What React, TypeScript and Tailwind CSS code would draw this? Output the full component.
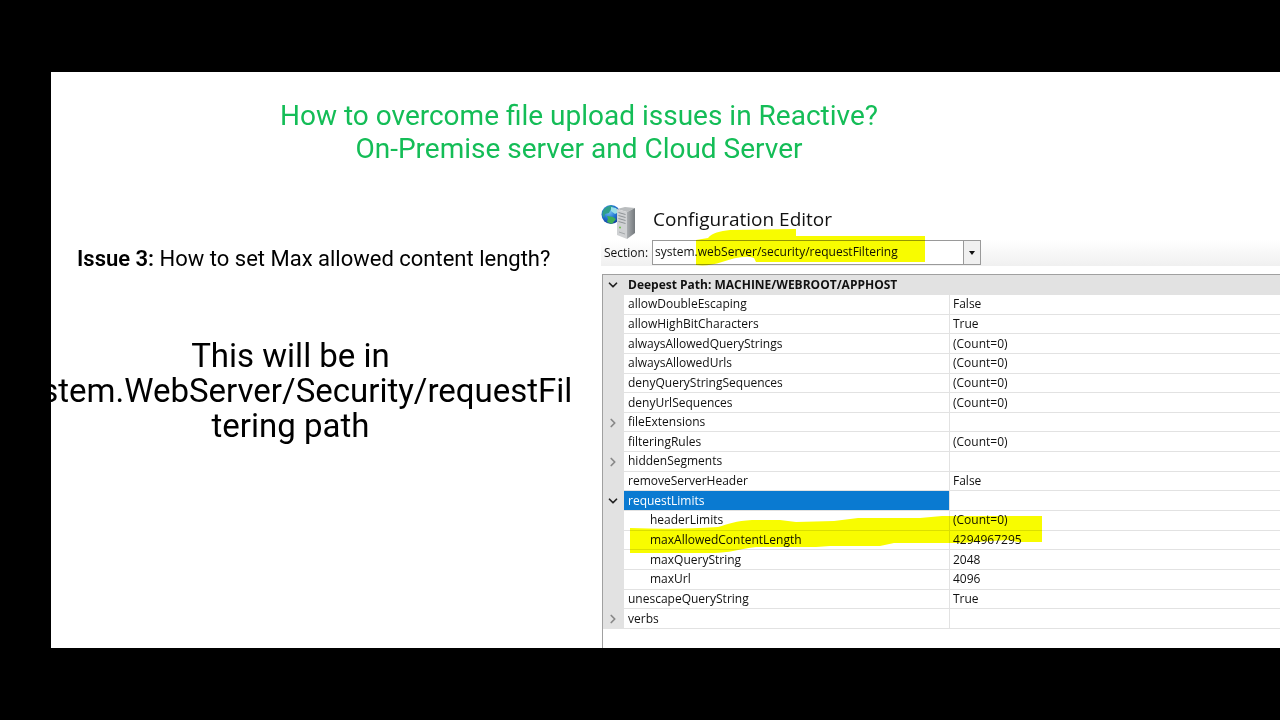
import { clsx } from "clsx";
import { ChevronDown, ChevronRight } from "lucide-react";

type Setting = {
  name: string;
  value?: string;
  nested?: boolean;
  selected?: boolean;
  state?: "open" | "closed";
};

const settings: Setting[] = [
  { name: "allowDoubleEscaping", value: "False" },
  { name: "allowHighBitCharacters", value: "True" },
  { name: "alwaysAllowedQueryStrings", value: "(Count=0)" },
  { name: "alwaysAllowedUrls", value: "(Count=0)" },
  { name: "denyQueryStringSequences", value: "(Count=0)" },
  { name: "denyUrlSequences", value: "(Count=0)" },
  { name: "fileExtensions", state: "closed" },
  { name: "filteringRules", value: "(Count=0)" },
  { name: "hiddenSegments", state: "closed" },
  { name: "removeServerHeader", value: "False" },
  { name: "requestLimits", state: "open", selected: true },
  { name: "headerLimits", value: "(Count=0)", nested: true },
  { name: "maxAllowedContentLength", value: "4294967295", nested: true },
  { name: "maxQueryString", value: "2048", nested: true },
  { name: "maxUrl", value: "4096", nested: true },
  { name: "unescapeQueryString", value: "True" },
  { name: "verbs", state: "closed" },
];

const ServerIcon = () => (
  <svg className="h-[36px] w-[36px]" viewBox="0 0 36 36" aria-hidden="true">
    <defs>
      <radialGradient id="globe" cx="0.4" cy="0.35" r="0.7">
        <stop offset="0" stopColor="#7cc4f5" />
        <stop offset="0.5" stopColor="#2478d4" />
        <stop offset="1" stopColor="#123a9c" />
      </radialGradient>
      <linearGradient id="tower" x1="0" x2="1" y1="0" y2="0">
        <stop offset="0" stopColor="#a9adb0" />
        <stop offset="1" stopColor="#74797d" />
      </linearGradient>
    </defs>
    <circle cx="10" cy="10.5" r="9.5" fill="url(#globe)" />
    <path d="M2 7C4 3 8 1 12 2l-2 3-2 4-4 1-1 4C1 12 1 9 2 7Z" fill="#2f9f8a" />
    <path d="M6 12l6 1 3 2-4 5-5-2 1-3Z" fill="#3fae5a" />
    <path d="M10 3l5 1 3 4-4 2-4-3Z" fill="#9adfe6" />
    <path d="M16 5l8-2 10 1-8 4Z" fill="#b9bcbe" />
    <path d="M16 5l10 3v27l-10-4Z" fill="#cfd1d3" />
    <path d="M26 8l8-4v25l-8 6Z" fill="url(#tower)" />
    <path
      d="M17.500 8.500l7 2M17.500 11.500l7 2M17.500 14.500l7 2M17.500 17.500l7 2"
      stroke="#8e9396"
      strokeWidth="1"
    />
    <path d="M18 28l6 2" stroke="#a4a8aa" strokeWidth="1" />
    <circle cx="19" cy="23.500" r="1" fill="#6cc04a" />
  </svg>
);

const SectionPicker = () => (
  <div className="flex items-center bg-linear-to-b from-white to-[#f0f0f0] pb-px pl-[3px]">
    <label htmlFor="section" className="w-[48px] text-xs leading-[22px]">
      Section:
    </label>
    <div className="relative w-[329px]">
      <select
        id="section"
        className="block h-[25px] w-full appearance-none border border-[#9a9a9a] bg-white pb-[2px] pl-[2px] text-xs outline-none"
      >
        <option>system.webServer/security/requestFiltering</option>
      </select>
      <span className="pointer-events-none absolute inset-y-0 right-0 flex w-[18px] items-center justify-center border border-[#9a9a9a] bg-[#f0f0f0]">
        <svg className="h-[4px] w-[6px]" viewBox="0 0 6 4" aria-hidden="true">
          <path d="M0 0h6L3 4Z" fill="#111" />
        </svg>
      </span>
      {/* marker stroke over the section path */}
      <svg
        className="pointer-events-none absolute top-[-11px] left-[44px] h-[37px] w-[230px] mix-blend-multiply"
        viewBox="0 0 230 37"
        aria-hidden="true"
      >
        <path
          d="M0 11L12 9C16 4 24 2 34 1L100 0V7L229 7V33L60 33L58 29C50 26 38 29 26 33C17 36 8 37 0 36Z"
          fill="#f8fc00"
        />
      </svg>
    </div>
  </div>
);

const SettingRow = ({ name, value, nested, selected, state }: Setting) => (
  <tr>
    <td className="bg-[#e2e2e2] p-0">
      {state && (
        <button
          type="button"
          aria-label={name}
          className="flex w-full items-center pl-[3px]"
        >
          {state === "open" ? (
            <ChevronDown className="size-[14px] stroke-[#222]" strokeWidth={3} />
          ) : (
            <ChevronRight className="size-[14px] stroke-[#888]" strokeWidth={3} />
          )}
        </button>
      )}
    </td>
    <td
      className={clsx(
        "border-r border-b border-[#e2e2e2] py-0",
        nested ? "pl-[26px]" : "pl-1",
        selected && "bg-[#0a7ad1] text-white",
      )}
    >
      {name}
    </td>
    <td className="border-b border-[#e2e2e2] py-0 pl-[3px]">{value}</td>
  </tr>
);

const SettingsGrid = () => (
  <div className="relative mt-[8px] ml-px flex-1 border-t border-l border-[#a0a0a0]">
    <table className="h-[354px] w-full table-fixed border-separate border-spacing-0 text-left text-xs leading-[18px]">
      <colgroup>
        <col className="w-[21px]" />
        <col className="w-[326px]" />
        <col />
      </colgroup>
      <thead>
        <tr className="bg-[#e2e2e2]">
          <th className="h-[20px] p-0">
            <button
              type="button"
              aria-label="Deepest Path"
              className="flex w-full items-center pl-[3px]"
            >
              <ChevronDown className="size-[14px] stroke-[#222]" strokeWidth={3} />
            </button>
          </th>
          <th colSpan={2} className="py-0 pl-1 font-bold">
            Deepest Path: MACHINE/WEBROOT/APPHOST
          </th>
        </tr>
      </thead>
      <tbody>
        {settings.map((setting) => (
          <SettingRow key={setting.name} {...setting} />
        ))}
      </tbody>
    </table>
    {/* marker stroke over maxAllowedContentLength */}
    <svg
      className="pointer-events-none absolute top-[240px] left-[27px] h-[39px] w-[413px] mix-blend-multiply"
      viewBox="0 0 413 39"
      aria-hidden="true"
    >
      <path
        d="M0 13C30 14 60 14 88 12C98 9 106 6 122 5L150 5L166 7L204 6L228 3L290 3L312 1L412 1V27L388 27L378 25L330 28L264 28L250 31L200 31L186 32L126 32C110 34 98 38 84 38L0 38Z"
        fill="#f8fc00"
      />
    </svg>
  </div>
);

const ConfigurationEditor = () => (
  <section className="flex min-w-0 flex-1 flex-col font-['Open_Sans','Noto_Sans',sans-serif] text-[#111]">
    <div className="flex items-start gap-4 pt-[9px]">
      <ServerIcon />
      <h2 className="text-[19px] leading-[30px]">Configuration Editor</h2>
    </div>
    <SectionPicker />
    <SettingsGrid />
  </section>
);

const App = () => {
  return (
    <div className="flex min-h-screen flex-col bg-black py-[72px] pl-[51px] font-[Roboto,sans-serif]">
      <main className="flex flex-1 flex-col overflow-hidden bg-white text-black">
        <h1 className="pt-[27px] pr-[173px] text-center text-[28px] leading-[33px] text-[#14bd57]">
          How to overcome file upload issues in Reactive?
          <br />
          On-Premise server and Cloud Server
        </h1>
        <div className="mt-[30px] flex flex-1">
          <div className="w-[550px] shrink-0 pt-[50px]">
            <p className="pl-[26px] text-[22px] leading-[28px]">
              <b className="font-semibold">Issue 3:</b> How to set Max allowed
              content length?
            </p>
            <div className="mt-[65px] flex w-[479px] flex-col items-center text-[33px] leading-[35px] whitespace-nowrap">
              <p>This will be in</p>
              <p>system.WebServer/Security/requestFil</p>
              <p>tering path</p>
            </div>
          </div>
          <ConfigurationEditor />
        </div>
      </main>
    </div>
  );
};

export default App;
